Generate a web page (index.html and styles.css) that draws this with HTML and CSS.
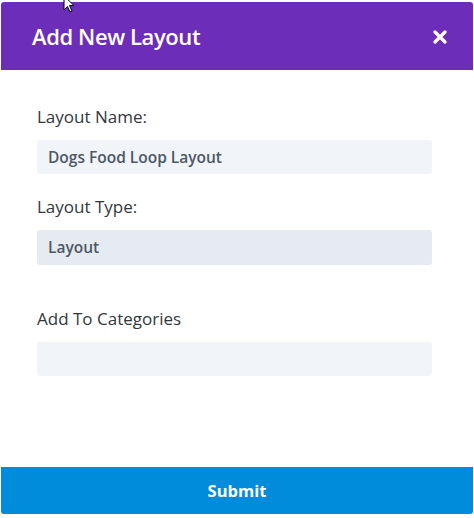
FILE: index.html
```html
<!DOCTYPE html>
<html>
<head>
<meta charset="utf-8">
<link rel="stylesheet" href="styles.css">
</head>
<body>
<div class="modal">
  <header class="modal-head">
    <h1 class="title">Add New Layout</h1>
    <svg class="close" width="14" height="14" viewBox="0 0 14 14"><path d="M2 2 L12 12 M12 2 L2 12" stroke="#fff" stroke-width="3.2" stroke-linecap="round"/></svg>
  </header>
  <div class="modal-body">
    <div class="field">
      <label class="label">Layout Name:</label>
      <div class="input">Dogs Food Loop Layout</div>
    </div>
    <div class="field">
      <label class="label">Layout Type:</label>
      <div class="input select">Layout</div>
    </div>
    <div class="field cats">
      <label class="label">Add To Categories</label>
      <div class="input"></div>
    </div>
  </div>
  <button class="submit">Submit</button>
</div>
<svg class="cursor" width="12" height="18" viewBox="0 0 12 18"><path d="M1 1 L1 15 L4.5 11.5 L7 17 L9 16 L6.5 10.5 L11 10.5 Z" fill="#fff" stroke="#000" stroke-width="1"/></svg>
</body>
</html>
```
FILE: styles.css
```css
html, body { margin: 0; padding: 0; }
body {
  background: #fff;
  font-family: "Open Sans", "Liberation Sans", sans-serif;
  width: 474px;
  height: 518px;
  position: relative;
  overflow: hidden;
}
.modal {
  margin: 2px 1px 0 1px;
  display: flex;
  flex-direction: column;
  height: 512px;
  background: #fff;
}
.modal-head {
  background: #6c2eb9;
  height: 68px;
  border-radius: 3px 3px 0 0;
  display: flex;
  align-items: center;
  justify-content: space-between;
  padding: 0 26px 0 31px;
  box-sizing: border-box;
}
.title {
  margin: 0;
  color: #fff;
  font-size: 22px;
  font-weight: 600;
  letter-spacing: -0.4px;
}
.close { display: block; margin-top: 1px; }
.modal-body {
  flex: 1;
  padding: 36px 41px 0 36px;
}
.field { display: flex; flex-direction: column; }
.field + .field { margin-top: 22px; }
.field.cats { margin-top: 43px; }
.label {
  font-size: 17px;
  color: #32373c;
  line-height: 22px;
  height: 22px;
  margin-bottom: 12px;
}
.input {
  height: 34px;
  background: #f1f4f8;
  border-radius: 3px;
  box-sizing: border-box;
  padding: 0 11px;
  font-size: 15.5px;
  font-weight: 600;
  color: #4c5866;
  line-height: 34px;
}
.input.select { background: #e6ebf1; height: 35px; }
.submit {
  border: none;
  background: #008bdb;
  color: #fff;
  font-family: inherit;
  font-size: 16.5px;
  font-weight: 700;
  height: 47px;
  border-radius: 0 0 3px 3px;
  padding: 0;
  margin: 0;
}
.cursor {
  position: absolute;
  left: 63px;
  top: -5px;
}
```
